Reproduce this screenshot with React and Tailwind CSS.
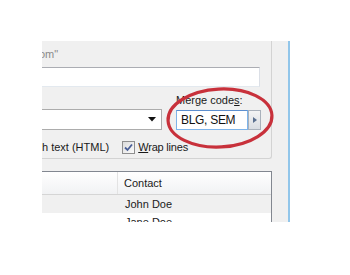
import React from "react";

export default function App() {
  return (
    <div
      className="relative w-[350px] h-[275px] bg-white overflow-hidden"
      style={{ fontFamily: '"Liberation Sans", Arial, sans-serif' }}
    >
      <div className="pt-[41px] pl-[42px]">
        <div className="w-[248px] h-[181px] bg-[#f0f0f0] border-r-2 border-[#92c6ea] overflow-hidden flex flex-col">
          {/* group box */}
          <div className="w-[230px] h-[118px] border-r border-b border-[#d3d3d3] rounded-br-[3px] flex flex-col shrink-0">
            <div className="h-[26px] flex items-center text-[11px] text-[#8a8a8a] ml-[-3px] whitespace-nowrap">
              om"
            </div>
            <div className="w-[218px] h-[20px] bg-white border-t border-[#abadb3] border-r border-r-[#dbdfe6] border-b border-b-[#e3e9ef] shrink-0" />
            <div className="mt-[7px] flex items-end">
              <div className="w-[120px] h-[21px] bg-white border-t border-r border-b border-[#acacac] flex items-center justify-end pr-[5px]">
                <svg width="8" height="5" viewBox="0 0 8 5">
                  <path d="M0 0 L8 0 L4 4.5 Z" fill="#111" />
                </svg>
              </div>
              <div className="ml-[14px] flex flex-col">
                <div className="text-[11px] leading-[13px] text-[#1a1a1a] mb-[3px] whitespace-nowrap">
                  Merge code<span className="underline">s</span>:
                </div>
                <div className="flex">
                  <div className="w-[72px] h-[20px] bg-white border border-[#7eb4ea] border-t-[#5d8fcf] flex items-center pl-[4px] text-[12px] tracking-[-0.3px] text-[#111] whitespace-nowrap">
                    BLG, SEM
                  </div>
                  <div className="w-[13px] h-[20px] border border-[#a9b1bb] bg-gradient-to-b from-[#f4f4f4] to-[#d9dde2] flex items-center justify-center">
                    <svg width="4" height="6" viewBox="0 0 4 6">
                      <path d="M0 0 L4 3 L0 6 Z" fill="#5a6f8e" />
                    </svg>
                  </div>
                </div>
              </div>
            </div>
            <div className="mt-[10px] h-[14px] flex items-center text-[11px] text-[#1a1a1a] whitespace-nowrap">
              <span>h text (HTML)</span>
              <div className="ml-[13px] w-[13px] h-[13px] border border-[#8f8f8f] bg-gradient-to-br from-[#dcdcdc] to-[#fbfbfb] flex items-center justify-center">
                <svg width="9" height="9" viewBox="0 0 9 9">
                  <path d="M1 4.5 L3.5 7 L8 1.5" stroke="#4a5f97" strokeWidth="1.8" fill="none" />
                </svg>
              </div>
              <span className="ml-[3px] tracking-[-0.2px]">
                <span className="underline">W</span>rap lines
              </span>
            </div>
          </div>
          {/* list view */}
          <div className="mt-[12px] w-[230px] border-t border-r border-[#828790] bg-white shrink-0 text-[11px] text-[#1a1a1a]">
            <div className="h-[23px] flex bg-gradient-to-b from-[#ffffff] to-[#f1f2f4] border-b border-[#d5d5d5]">
              <div className="w-[76px] border-r border-[#e3e3e3]" />
              <div className="flex items-center pl-[6px]">Contact</div>
            </div>
            <div className="h-[18px] flex bg-[#f0f0f0]">
              <div className="w-[76px]" />
              <div className="flex items-center pl-[7px]">John Doe</div>
            </div>
            <div className="h-[18px] flex bg-white">
              <div className="w-[76px]" />
              <div className="flex items-center pl-[7px]">Jane Doe</div>
            </div>
          </div>
        </div>
      </div>
      <svg
        className="absolute left-[163px] top-[85px]"
        width="114"
        height="66"
        viewBox="0 0 114 66"
      >
        <ellipse
          cx="57"
          cy="33"
          rx="52"
          ry="29"
          fill="none"
          stroke="#c8313b"
          strokeWidth="3.2"
          transform="rotate(-3 57 33)"
        />
      </svg>
    </div>
  );
}
